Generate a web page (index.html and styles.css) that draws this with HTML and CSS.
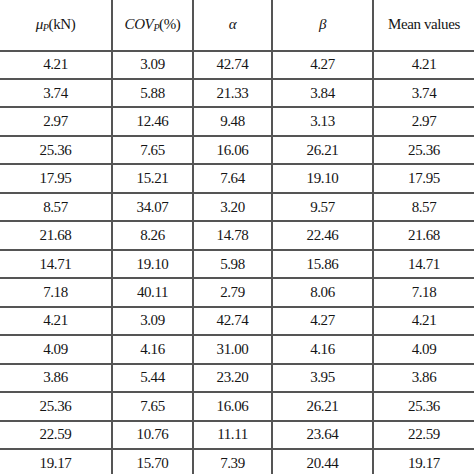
FILE: index.html
```html
<!DOCTYPE html>
<html>
<head>
<meta charset="utf-8">
<link rel="stylesheet" href="styles.css">
</head>
<body>
<table class="data">
  <colgroup>
    <col class="c1"><col class="c2"><col class="c3"><col class="c4"><col class="c5">
  </colgroup>
  <thead>
    <tr>
      <th><i>μ<sub>P</sub></i>(kN)</th>
      <th><i>COV<sub>P</sub></i>(%)</th>
      <th><i>α</i></th>
      <th><i>β</i></th>
      <th>Mean values</th>
    </tr>
  </thead>
  <tbody>
    <tr><td>4.21</td><td>3.09</td><td>42.74</td><td>4.27</td><td>4.21</td></tr>
    <tr><td>3.74</td><td>5.88</td><td>21.33</td><td>3.84</td><td>3.74</td></tr>
    <tr><td>2.97</td><td>12.46</td><td>9.48</td><td>3.13</td><td>2.97</td></tr>
    <tr><td>25.36</td><td>7.65</td><td>16.06</td><td>26.21</td><td>25.36</td></tr>
    <tr><td>17.95</td><td>15.21</td><td>7.64</td><td>19.10</td><td>17.95</td></tr>
    <tr><td>8.57</td><td>34.07</td><td>3.20</td><td>9.57</td><td>8.57</td></tr>
    <tr><td>21.68</td><td>8.26</td><td>14.78</td><td>22.46</td><td>21.68</td></tr>
    <tr><td>14.71</td><td>19.10</td><td>5.98</td><td>15.86</td><td>14.71</td></tr>
    <tr><td>7.18</td><td>40.11</td><td>2.79</td><td>8.06</td><td>7.18</td></tr>
    <tr><td>4.21</td><td>3.09</td><td>42.74</td><td>4.27</td><td>4.21</td></tr>
    <tr><td>4.09</td><td>4.16</td><td>31.00</td><td>4.16</td><td>4.09</td></tr>
    <tr><td>3.86</td><td>5.44</td><td>23.20</td><td>3.95</td><td>3.86</td></tr>
    <tr><td>25.36</td><td>7.65</td><td>16.06</td><td>26.21</td><td>25.36</td></tr>
    <tr><td>22.59</td><td>10.76</td><td>11.11</td><td>23.64</td><td>22.59</td></tr>
    <tr><td>19.17</td><td>15.70</td><td>7.39</td><td>20.44</td><td>19.17</td></tr>
  </tbody>
</table>
</body>
</html>
```
FILE: styles.css
```css
html, body {
  margin: 0;
  padding: 0;
  background: #ffffff;
  overflow: hidden;
}
.data {
  width: 474px;
  table-layout: fixed;
  border-collapse: collapse;
  font-family: "Liberation Serif", "Times New Roman", serif;
  font-size: 15px;
  letter-spacing: -0.4px;
  color: #151515;
}
.c1 { width: 112px; }
.c2 { width: 81px; }
.c3 { width: 79px; }
.c4 { width: 101px; }
.c5 { width: 101px; }
.data th, .data td {
  padding: 0;
  text-align: center;
  vertical-align: middle;
  border-left: 2px solid #555;
  border-bottom: 2px solid #555;
}
.data th:first-child, .data td:first-child {
  border-left: none;
}
.data th {
  font-weight: normal;
  height: 49.5px;
}
.data td {
  height: 26.48px;
}
.data sub {
  font-size: 10px;
  vertical-align: -2px;
  line-height: 0;
}
```
